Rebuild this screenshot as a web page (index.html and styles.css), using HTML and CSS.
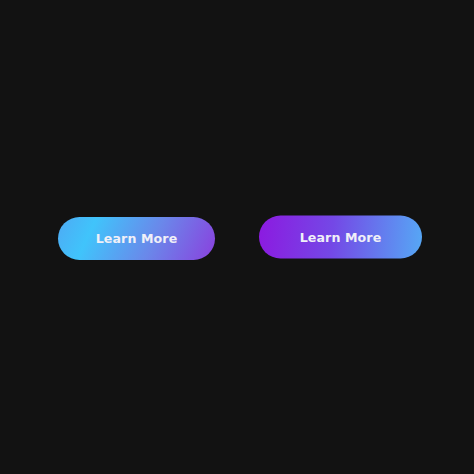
FILE: index.html
```html
<!DOCTYPE html>
<html>
<head>
<meta charset="utf-8">
<link rel="stylesheet" href="styles.css">
</head>
<body>
<div class="row">
  <button class="btn btn-a">Learn More</button>
  <button class="btn btn-b">Learn More</button>
</div>
</body>
</html>
```

FILE: styles.css
```css
html, body {
  margin: 0;
  height: 100%;
  background: #121212;
}
.row {
  box-sizing: border-box;
  height: 100%;
  padding-left: 6px;
  padding-top: 2px;
  display: flex;
  align-items: center;
  justify-content: center;
  gap: 44px;
}
.btn {
  border: none;
  border-radius: 999px;
  width: 157px;
  height: 43px;
  padding: 0;
  color: #f0f0f8;
  font-family: "DejaVu Sans", Verdana, sans-serif;
  font-weight: bold;
  font-size: 12.6px;
  letter-spacing: 0.1px;
}
.btn-a {
  background: linear-gradient(115deg, #4eaaf4 0%, #40c4fb 22%, #6a88ea 60%, #8a40de 100%);
}
.btn-b {
  width: 163px;
  transform: translateY(-1.5px);
  background: linear-gradient(95deg, #8c1ae0 0%, #7448e6 45%, #56a8f5 100%);
}
```
